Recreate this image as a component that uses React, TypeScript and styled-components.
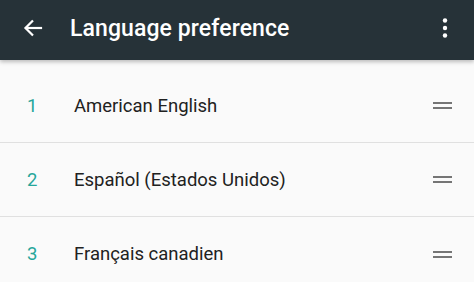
import React from "react";
import styled, { createGlobalStyle } from "styled-components";

const Global = createGlobalStyle`
  html, body { margin: 0; padding: 0; background: #fafafa; }
  body { font-family: Roboto, "Noto Sans", sans-serif; width: 474px; height: 282px; overflow: hidden; }
`;

const Screen = styled.div`
  width: 474px;
  height: 282px;
  background: #fafafa;
  display: flex;
  flex-direction: column;
  overflow: hidden;
`;

const Toolbar = styled.header`
  height: 60px;
  flex: none;
  box-sizing: border-box;
  background: #263238;
  display: flex;
  align-items: center;
  padding: 0 16px 4px 20px;
  box-shadow: 0 2px 4px rgba(0, 0, 0, 0.25);
  position: relative;
  z-index: 1;
`;

const IconButton = styled.div`
  width: 26px;
  height: 26px;
  display: flex;
  align-items: center;
  justify-content: center;
  flex: none;
`;

const Title = styled.h1`
  margin: 0 0 0 24px;
  flex: 1;
  color: #ffffff;
  font-size: 23px;
  font-weight: 500;
  letter-spacing: 0.1px;
`;

const List = styled.div`
  padding-top: 9px;
  display: flex;
  flex-direction: column;
`;

const Row = styled.div`
  height: 74px;
  flex: none;
  display: flex;
  align-items: center;
  padding: 0 22px 0 27px;
  border-bottom: 1.5px solid #e0e0e0;
  box-sizing: border-box;
  &:last-child { border-bottom: none; }
`;

const Index = styled.span`
  width: 47px;
  color: #26a69a;
  font-size: 18.5px;
`;

const Label = styled.span`
  flex: 1;
  color: #212121;
  font-size: 18.5px;
`;

const Handle = styled.div`
  width: 19px;
  display: flex;
  flex-direction: column;
  gap: 3px;
  & > i {
    display: block;
    height: 2px;
    background: #757575;
  }
`;

const langs = ["American English", "Español (Estados Unidos)", "Français canadien"];

export default function App() {
  return (
    <Screen>
      <Global />
      <Toolbar>
        <IconButton>
          <svg width="20" height="20" viewBox="0 0 20 20" fill="none" stroke="#fff" strokeWidth="2.2" strokeLinecap="square">
            <path d="M18 10H3" />
            <path d="M10 2.5L2.5 10L10 17.5" strokeLinecap="butt" />
          </svg>
        </IconButton>
        <Title>Language preference</Title>
        <IconButton>
          <svg width="6" height="20" viewBox="0 0 6 20" fill="#fff">
            <circle cx="3" cy="2.5" r="2.2" />
            <circle cx="3" cy="10" r="2.2" />
            <circle cx="3" cy="17.5" r="2.2" />
          </svg>
        </IconButton>
      </Toolbar>
      <List>
        {langs.map((l, i) => (
          <Row key={l}>
            <Index>{i + 1}</Index>
            <Label>{l}</Label>
            <Handle>
              <i />
              <i />
            </Handle>
          </Row>
        ))}
      </List>
    </Screen>
  );
}
